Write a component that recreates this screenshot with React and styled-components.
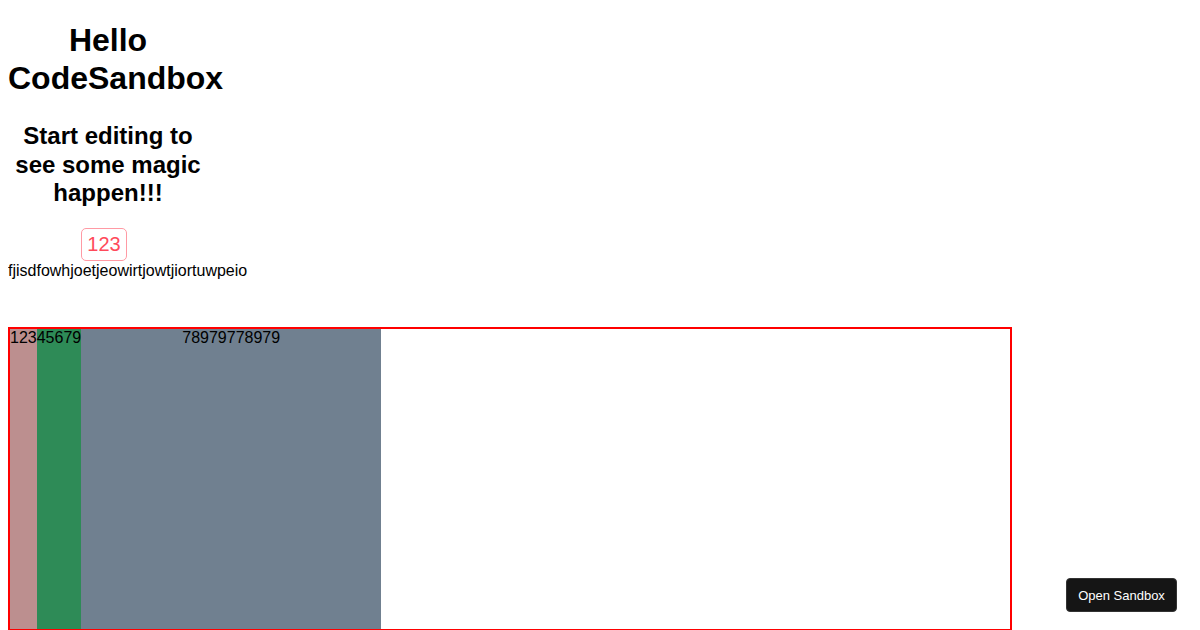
import React from "react"
import styled, { createGlobalStyle } from "styled-components"

const GlobalStyle = createGlobalStyle`
  body {
    margin: 8px;
    font-family: "Liberation Sans", Arial, sans-serif;
    background: #fff;
    color: #000;
  }
`

const Intro = styled.div`
  width: 200px;
  text-align: center;
  h1 {
    font-size: 32px;
    line-height: 38px;
    margin: 13px 0 25px;
  }
  h2 {
    font-size: 24px;
    line-height: 28.5px;
    margin: 0 0 20px;
  }
`

const Badge = styled.span`
  display: inline-block;
  margin-right: 8px;
  padding: 4px 5px;
  font-size: 20px;
  line-height: 23px;
  color: #ff4a5a;
  border: 1px solid #ff9aa4;
  border-radius: 5px;
`

const Word = styled.div`
  text-align: left;
  font-size: 16px;
  line-height: 18px;
  margin-top: 1px;
`

const Frame = styled.div`
  display: flex;
  align-items: stretch;
  width: 1000px;
  height: 300px;
  margin-top: 47px;
  border: 2px solid #f00;
`

const Column = styled.div`
  background: ${(p) => p.$bg};
  width: ${(p) => (p.$width ? `${p.$width}px` : "auto")};
  text-align: center;
  font-size: 16px;
  line-height: 18px;
`

const OpenButton = styled.a`
  position: fixed;
  right: 23px;
  bottom: 18px;
  display: flex;
  align-items: center;
  justify-content: center;
  width: 111px;
  height: 34px;
  background: #151515;
  color: #fff;
  font-family: "Liberation Sans", Arial, sans-serif;
  font-size: 13px;
  border-radius: 4px;
  text-decoration: none;
  border: 1px solid #333;
  box-sizing: border-box;
`

export default function App() {
  return (
    <>
      <GlobalStyle />
      <Intro>
        <h1>Hello CodeSandbox</h1>
        <h2>Start editing to see some magic happen!!!</h2>
        <Badge>123</Badge>
        <Word>fjisdfowhjoetjeowirtjowtjiortuwpeio</Word>
      </Intro>
      <Frame>
        <Column $bg="rosybrown">123</Column>
        <Column $bg="seagreen">45679</Column>
        <Column $bg="slategray" $width={300}>78979778979</Column>
      </Frame>
      <OpenButton href="#">Open Sandbox</OpenButton>
    </>
  )
}
